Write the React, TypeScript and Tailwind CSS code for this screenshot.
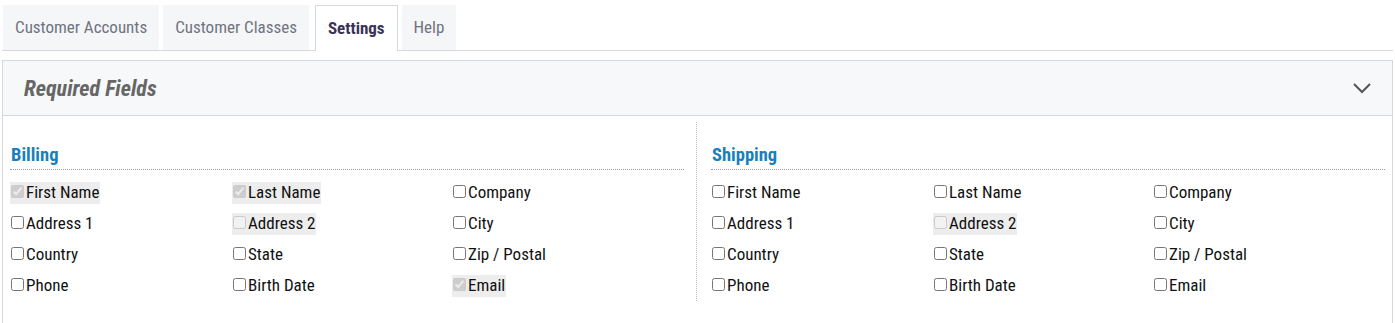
import React from "react";

type Field = { label: string; checked?: boolean; disabled?: boolean };

const billing: Field[] = [
  { label: "First Name", checked: true, disabled: true },
  { label: "Last Name", checked: true, disabled: true },
  { label: "Company" },
  { label: "Address 1" },
  { label: "Address 2", disabled: true },
  { label: "City" },
  { label: "Country" },
  { label: "State" },
  { label: "Zip / Postal" },
  { label: "Phone" },
  { label: "Birth Date" },
  { label: "Email", checked: true, disabled: true },
];

const shipping: Field[] = [
  { label: "First Name" },
  { label: "Last Name" },
  { label: "Company" },
  { label: "Address 1" },
  { label: "Address 2", disabled: true },
  { label: "City" },
  { label: "Country" },
  { label: "State" },
  { label: "Zip / Postal" },
  { label: "Phone" },
  { label: "Birth Date" },
  { label: "Email" },
];

const condensed = {
  fontFamily: '"Roboto Condensed", "Liberation Sans Narrow", Roboto, sans-serif',
};

function Check({ f }: { f: Field }) {
  return (
    <div className="h-[31px] flex items-center">
      <label
        className={
          "inline-flex items-center h-[22px] pl-px pr-[1px] text-[17px] text-[#111] leading-none " +
          (f.disabled ? "bg-[#ededed]" : "")
        }
      >
        <input
          type="checkbox"
          defaultChecked={f.checked}
          disabled={f.disabled}
          className="w-[13px] h-[13px] mr-[2px] mb-[2px]"
        />
        <span>{f.label}</span>
      </label>
    </div>
  );
}

function Section({ title, fields }: { title: string; fields: Field[] }) {
  return (
    <div className="flex-1">
      <div className="text-[18.5px] font-bold text-[#1a7fb7] pl-px pb-[3px] border-b border-dotted border-[#9a9a9a] leading-[22px]">
        {title}
      </div>
      <div className="grid grid-cols-[222px_220px_1fr] pt-[7px]">
        {fields.map((f) => (
          <Check key={f.label} f={f} />
        ))}
      </div>
    </div>
  );
}

export default function App() {
  const tab =
    "h-[45px] flex items-center px-[12px] bg-[#f5f6f8] text-[17px] text-[#6f7480]";
  return (
    <div className="w-[1395px] h-[323px] bg-white overflow-hidden" style={condensed}>
      <div className="flex items-end gap-[4px] pl-px pt-[5px] mx-[2px] border-b border-[#d5d9de]">
        <div className={tab}>Customer Accounts</div>
        <div className={tab + " mr-[2px]"}>Customer Classes</div>
        <div className="h-[46px] -mb-px flex items-center px-[12px] bg-white border border-b-0 border-[#d5d9de] text-[17px] font-bold text-[#3b3357]">
          Settings
        </div>
        <div className={tab}>Help</div>
      </div>
      <div className="mx-[2px] mt-[9px] border border-[#d5d9de] h-[400px]">
        <div className="h-[55px] bg-[#f7f8fa] border-b border-[#d5d9de] flex items-center justify-between pl-[21px] pr-[20px]">
          <span className="text-[22px] italic font-bold text-[#666]">Required Fields</span>
          <svg width="20" height="12" viewBox="0 0 20 12" fill="none">
            <path d="M2 2 L10 10 L18 2" stroke="#555" strokeWidth="2" />
          </svg>
        </div>
        <div className="flex px-[7px] pt-[6px]">
          <div className="flex-1 pt-[22px] pr-[12px]">
            <Section title="Billing" fields={billing} />
          </div>
          <div className="w-0 border-l border-dotted border-[#bbb] h-[179px]" />
          <div className="flex-1 pt-[22px] pl-[14px]">
            <Section title="Shipping" fields={shipping} />
          </div>
        </div>
      </div>
    </div>
  );
}
